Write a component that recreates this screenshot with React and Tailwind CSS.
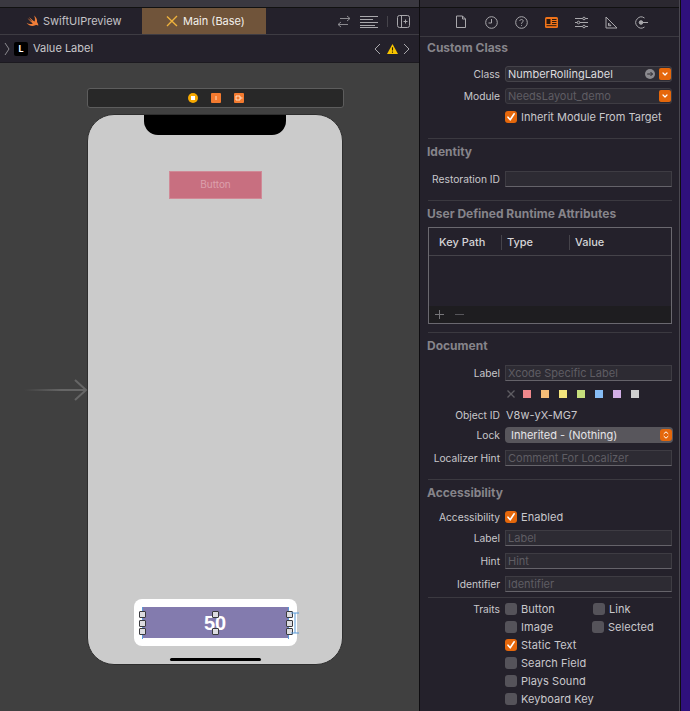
import React from "react";

function Check({ on }) {
  return (
    <span className={`w-[12px] h-[12px] rounded-[3px] flex items-center justify-center shrink-0 ${on ? "bg-[#e5670b]" : "bg-[#55535a]"}`}>
      {on && (
        <svg width="10" height="10" viewBox="0 0 10 10" fill="none">
          <path d="M2 5.2 L4.2 7.8 L8.2 1.8" stroke="#fff" strokeWidth="1.6" strokeLinecap="round" strokeLinejoin="round" />
        </svg>
      )}
    </span>
  );
}

function Chevron() {
  return (
    <span className="w-[12px] h-[12px] rounded-[2px] bg-[#e5670b] flex items-center justify-center">
      <svg width="8" height="8" viewBox="0 0 8 8" fill="none">
        <path d="M2 3 L4 5 L6 3" stroke="#fff" strokeWidth="1.2" strokeLinecap="round" strokeLinejoin="round" />
      </svg>
    </span>
  );
}

function Stepper() {
  return (
    <span className="w-[12px] h-[12px] rounded-[3px] bg-[#e5670b] flex items-center justify-center">
      <svg width="8" height="10" viewBox="0 0 8 10" fill="none">
        <path d="M2 3.6 L4 1.8 L6 3.6 M2 6.4 L4 8.2 L6 6.4" stroke="#fff" strokeWidth="1" strokeLinecap="round" strokeLinejoin="round" />
      </svg>
    </span>
  );
}

function Heading({ children, className = "" }) {
  return <div className={`pl-[7px] text-[12px] leading-[14px] font-bold text-[#86848a] ${className}`}>{children}</div>;
}

function Label({ children }) {
  return <div className="w-[80px] text-right text-[10.25px] text-[#c9c8cb] leading-[14px] shrink-0 whitespace-nowrap">{children}</div>;
}

function Field({ placeholder }) {
  return (
    <div className="w-[167px] h-[16px] ml-[5px] bg-[#2d2b33] border border-[#3e3c43] border-b-[#65636a] px-[2px] text-[11px] leading-[14px] text-[#5f5d63] overflow-hidden whitespace-nowrap">
      {placeholder}
    </div>
  );
}

function Divider({ className = "" }) {
  return <div className={`ml-[8px] w-[244px] h-px bg-[#3b3940] ${className}`} />;
}

function Row({ label, className = "", children }) {
  return (
    <div className={`flex items-center ${className}`}>
      <Label>{label}</Label>
      {children}
    </div>
  );
}

function Trait({ on, children, w = "w-[88px]" }) {
  return (
    <div className={`flex items-center gap-[4px] ${w}`}>
      <Check on={on} />
      <span className="text-[11px] leading-[14px] tracking-[0.05px] text-[#c9c8cb] whitespace-nowrap">{children}</span>
    </div>
  );
}

function InspectorTabs() {
  const stroke = "#a9a8ac";
  return (
    <div className="h-[28px] flex items-center pl-[35px] gap-[17px]">
      <svg width="13" height="14" viewBox="0 0 13 14" fill="none" stroke={stroke}>
        <path d="M1.5 1 H7.5 L10.5 4 V12.5 H1.5 Z M7.5 1 V4 H10.5" />
      </svg>
      <svg width="13" height="13" viewBox="0 0 13 13" fill="none" stroke={stroke}>
        <circle cx="6.5" cy="6.5" r="5.8" />
        <path d="M6.5 3 V7 H3.5" />
      </svg>
      <svg width="13" height="13" viewBox="0 0 13 13" fill="none" stroke={stroke}>
        <circle cx="6.5" cy="6.5" r="5.8" />
        <path d="M4.8 5 C4.8 3 8.2 3 8.2 5 C8.2 6.2 6.5 6.2 6.5 7.8 M6.5 9.2 V10" />
      </svg>
      <svg width="13" height="11" viewBox="0 0 13 11" fill="none">
        <rect width="13" height="11" rx="1.5" fill="#f0731a" />
        <rect x="1.5" y="2" width="4" height="5" fill="#2a1a10" />
        <path d="M7 2.5 H11.5 M7 4.5 H11.5 M7 6.5 H11.5 M1.5 8.7 H11.5" stroke="#2a1a10" strokeWidth="1" />
      </svg>
      <svg width="13" height="13" viewBox="0 0 13 13" fill="none" stroke={stroke}>
        <path d="M0 2.5 H13 M0 6.5 H13 M0 10.5 H13" />
        <circle cx="9" cy="2.5" r="1.3" fill="#24212b" />
        <circle cx="3.5" cy="6.5" r="1.3" fill="#24212b" />
        <circle cx="9" cy="10.5" r="1.3" fill="#24212b" />
      </svg>
      <svg width="13" height="13" viewBox="0 0 13 13" fill="none" stroke={stroke}>
        <path d="M1 1 L12 12 H1 Z M3.5 7 L6 9.7 H3.5 Z" />
      </svg>
      <svg width="13" height="13" viewBox="0 0 13 13" fill="none" stroke={stroke}>
        <path d="M9.5 2 A5.5 5.5 0 1 0 9.5 11" />
        <circle cx="6" cy="6.5" r="1.8" fill={stroke} />
        <path d="M7 6.5 H13" />
      </svg>
    </div>
  );
}

function Inspector() {
  const colors = ["#f0888c", "#f6bd78", "#f4e57c", "#c6df7c", "#87bdf6", "#d2aee6", "#cfcfcf"];
  return (
    <div className="w-[259px] h-[711px] bg-[#24212b] overflow-hidden shrink-0">
      <div className="h-[7px] bg-[#2b2830]" />
      <div className="h-px bg-[#111]" />
      <InspectorTabs />
      <div className="h-px bg-[#3b3940]" />
      <Heading className="mt-[4px]">Custom Class</Heading>

      <Row label="Class" className="mt-[11px]">
        <div className="w-[167px] h-[16px] ml-[5px] bg-[#2f2d35] border border-[#45434a] rounded-[3px] flex items-center pl-[2px] text-[11px] text-[#dcdbde] whitespace-nowrap">
          <span className="flex-1">NumberRollingLabel</span>
          <span className="w-[10px] h-[10px] rounded-full bg-[#8b8a8f] mr-[4px] flex items-center justify-center">
            <svg width="8" height="8" viewBox="0 0 8 8" fill="none">
              <path d="M1.2 4 H6.5 M4.5 2 L6.5 4 L4.5 6" stroke="#2a282f" strokeWidth="1" />
            </svg>
          </span>
          <Chevron />
        </div>
      </Row>
      <Row label="Module" className="mt-[6px]">
        <div className="w-[167px] h-[16px] ml-[5px] bg-[#2d2b33] border border-[#3e3c43] rounded-[3px] flex items-center pl-[2px] text-[11px] text-[#5f5d63] whitespace-nowrap">
          <span className="flex-1">NeedsLayout_demo</span>
          <Chevron />
        </div>
      </Row>
      <div className="flex items-center mt-[6px] ml-[85px] h-[14px] gap-[4px]">
        <Check on />
        <span className="text-[11px] text-[#c9c8cb] whitespace-nowrap">Inherit Module From Target</span>
      </div>
      <Divider className="mt-[14px]" />

      <Heading className="mt-[6px]">Identity</Heading>
      <Row label="Restoration ID" className="mt-[12px]">
        <Field placeholder="" />
      </Row>
      <Divider className="mt-[13px]" />

      <Heading className="mt-[6px]">User Defined Runtime Attributes</Heading>
      <div className="ml-[8px] mt-[6px] w-[244px] h-[97px] border border-[#6a686f] flex flex-col">
        <div className="h-[28px] pt-[1px] flex items-center border-b border-[#45434a] text-[11px] font-medium text-[#d5d4d7]">
          <span className="w-[73px] pl-[10px] border-r border-[#45434a] leading-[15px]">Key Path</span>
          <span className="w-[68px] pl-[5px] border-r border-[#45434a] leading-[15px]">Type</span>
          <span className="pl-[5px] leading-[15px]">Value</span>
        </div>
        <div className="flex-1" />
        <div className="h-[17px] bg-[#1e1d20] flex items-center pl-[5px] gap-[9px]">
          <svg width="11" height="11" viewBox="0 0 11 11" stroke="#77767a"><path d="M5.5 1 V10 M1 5.5 H10" /></svg>
          <svg width="11" height="11" viewBox="0 0 11 11" stroke="#56555a"><path d="M1 5.5 H10" /></svg>
        </div>
      </div>
      <Divider className="mt-[8px]" />

      <Heading className="mt-[6px]">Document</Heading>
      <Row label="Label" className="mt-[12px]">
        <Field placeholder="Xcode Specific Label" />
      </Row>
      <div className="flex items-center ml-[87px] mt-[6px] h-[13px]">
        <svg width="8" height="8" viewBox="0 0 8 8" stroke="#5f5d63" strokeWidth="1.3" className="mr-[8px]"><path d="M0.5 0.5 L7.5 7.5 M7.5 0.5 L0.5 7.5" /></svg>
        <div className="flex gap-[10px]">
          {colors.map((c) => (
            <span key={c} className="w-[8px] h-[8px]" style={{ backgroundColor: c }} />
          ))}
        </div>
      </div>
      <Row label="Object ID" className="mt-[8px]">
        <span className="ml-[6px] text-[11px] leading-[14px] text-[#c9c8cb]">V8w-yX-MG7</span>
      </Row>
      <Row label="Lock" className="mt-[5px]">
        <div className="w-[168px] h-[16px] ml-[5px] bg-[#58565c] rounded-[4px] flex items-center pl-[6px] pr-[1px] text-[11px] text-[#e6e5e8] whitespace-nowrap">
          <span className="flex-1">Inherited - (Nothing)</span>
          <Stepper />
        </div>
      </Row>
      <Row label="Localizer Hint" className="mt-[7px]">
        <Field placeholder="Comment For Localizer" />
      </Row>
      <Divider className="mt-[13px]" />

      <Heading className="mt-[6px]">Accessibility</Heading>
      <Row label="Accessibility" className="mt-[10px]">
        <div className="ml-[5px]"><Trait on>Enabled</Trait></div>
      </Row>
      <Row label="Label" className="mt-[6px]"><Field placeholder="Label" /></Row>
      <Row label="Hint" className="mt-[7px]"><Field placeholder="Hint" /></Row>
      <Row label="Identifier" className="mt-[7px]"><Field placeholder="Identifier" /></Row>
      <Divider className="mt-[5px]" />
      <Row label="Traits" className="mt-[4px]">
        <div className="ml-[5px] flex"><Trait>Button</Trait><Trait>Link</Trait></div>
      </Row>
      <div className="ml-[85px] mt-[4px] flex"><Trait>Image</Trait><Trait>Selected</Trait></div>
      <div className="ml-[85px] mt-[4px] flex"><Trait on>Static Text</Trait></div>
      <div className="ml-[85px] mt-[4px] flex"><Trait w="w-[120px]">Search Field</Trait></div>
      <div className="ml-[85px] mt-[4px] flex"><Trait w="w-[120px]">Plays Sound</Trait></div>
      <div className="ml-[85px] mt-[4px] flex"><Trait w="w-[120px]">Keyboard Key</Trait></div>
    </div>
  );
}

function Handle({ className }) {
  return <span className={`absolute w-[7px] h-[7px] bg-[#dcdce0] border border-[#3a3a3e] rounded-[1px] ${className}`} />;
}

function Canvas() {
  return (
    <div className="relative flex-1 bg-[#404040] overflow-hidden">
      {/* scene dock */}
      <div className="absolute left-[87px] top-[25px] w-[257px] h-[20px] bg-[#282828] border border-[#5d5d5d] rounded-[3px] flex items-center justify-center gap-[13px]">
        <span className="w-[10px] h-[10px] rounded-full bg-[#f5a800] flex items-center justify-center">
          <span className="w-[4px] h-[4px] bg-white" />
        </span>
        <span className="w-[10px] h-[10px] rounded-[1px] bg-[#f37a2f] flex items-center justify-center">
          <svg width="6" height="6" viewBox="0 0 6 6" stroke="#ffd9b8" fill="none"><path d="M3 1 V5" /></svg>
        </span>
        <span className="w-[10px] h-[10px] rounded-[1px] bg-[#f37a2f] flex items-center justify-center">
          <svg width="8" height="6" viewBox="0 0 8 6" stroke="#ffe1c8" fill="none"><path d="M1 1 H5 V5 H1 Z M5 3 H7.5" /></svg>
        </span>
      </div>

      {/* phone */}
      <div className="absolute left-[87px] top-[51px] w-[256px] h-[551px] bg-[#cbcbcb] rounded-[27px] border border-[#2e2e2e] overflow-hidden">
        <div className="absolute left-[56px] top-[-1px] w-[142px] h-[21px] bg-black rounded-b-[14px]" />
        <div className="absolute left-[81px] top-[56px] w-[93px] h-[28px] pb-[2px] bg-[#c86f80] border border-[#d08a97] flex items-center justify-center text-[10px] text-[#dca0ac]">
          Button
        </div>
        <div className="absolute left-[46px] top-[484px] w-[163px] h-[47px] bg-white rounded-[8px]" />
        <div className="absolute left-[54px] top-[492px] w-[146px] h-[31px] bg-[#837bae]" />
        <div className="absolute left-[82px] top-[543px] w-[91px] h-[3px] bg-black rounded-full" />
      </div>

      {/* selected label overlay */}
      <div className="absolute left-[142px] top-[544px] w-[146px] h-[31px] text-white font-semibold text-[20px] flex items-center justify-center font-['Liberation_Sans',sans-serif]">
        50
      </div>
      <span className="absolute left-[142px] top-[544px] w-px h-[32px] bg-[#5a9bd8]" />
      <span className="absolute left-[288px] top-[544px] w-px h-[32px] bg-[#5a9bd8]" />
      <Handle className="left-[139px] top-[548px]" />
      <Handle className="left-[139px] top-[557px]" />
      <Handle className="left-[139px] top-[565px]" />
      <Handle className="left-[212px] top-[548px]" />
      <Handle className="left-[212px] top-[565px]" />
      <Handle className="left-[286px] top-[548px]" />
      <Handle className="left-[286px] top-[557px]" />
      <Handle className="left-[286px] top-[565px]" />
      <svg className="absolute left-[291px] top-[549px]" width="8" height="22" viewBox="0 0 8 22" stroke="#5a9bd8" fill="none">
        <path d="M0 1 H8 M4 1 V21 M0 21 H8" />
      </svg>

      {/* initial scene arrow */}
      <svg className="absolute left-[24px] top-[314px]" width="64" height="26" viewBox="0 0 64 26" fill="none">
        <defs>
          <linearGradient id="fade" x1="0" x2="1" y1="0" y2="0">
            <stop offset="0" stopColor="#636363" stopOpacity="0" />
            <stop offset="0.6" stopColor="#666666" />
          </linearGradient>
        </defs>
        <rect x="0" y="12" width="62" height="2" fill="url(#fade)" />
        <path d="M51 3 L62 13 L51 23" stroke="#666666" strokeWidth="2" />
      </svg>
    </div>
  );
}

function Editor() {
  return (
    <div className="w-[419px] h-[711px] flex flex-col shrink-0 bg-[#24212b]">
      <div className="h-[7px] bg-[#3a3840]" />
      <div className="h-px bg-[#111]" />
      <div className="h-[27px] flex items-stretch border-b border-[#3e3c43]">
        <div className="w-[142px] flex items-center pl-[26px] gap-[4px] text-[11px] text-[#c4c3c7]">
          <svg width="13" height="12" viewBox="0 0 13 12">
            <path d="M8 0.5 C10.5 2.5 11.5 5 11 7 C12.3 8.7 12.4 10 12.2 10.8 C11.3 9.7 10.2 9.7 9.2 10.3 C6.5 11.7 3 11 0.5 7.8 C2.5 9.2 5 9.5 6.8 8.5 C5 7.2 3 5 1.5 3 C3.2 4.5 5 5.8 6.3 6.6 C5 5.2 3.8 3.5 3 2 C4.8 3.8 7 5.6 8.6 6.4 C9.3 4.6 9 2.5 8 0.5 Z" fill="#ef7d38" />
          </svg>
          <span>SwiftUIPreview</span>
        </div>
        <div className="w-[124px] bg-[#70543a] flex items-center pl-[24px] gap-[5px] text-[11px] text-[#f2efeb]">
          <svg width="12" height="12" viewBox="0 0 12 12" stroke="#eeb23d" strokeWidth="1.4" fill="none">
            <path d="M1 1.5 L11 11 M11 1 L1 11" />
          </svg>
          <span>Main (Base)</span>
        </div>
        <div className="flex-1 flex items-center pl-[71px]">
          <svg width="14" height="13" viewBox="0 0 14 13" stroke="#8b8a8f" fill="none">
            <path d="M3 3.5 H13 M10 1 L13 3.5 L10 6 M11 9.5 H1 M4 7 L1 9.5 L4 12" />
          </svg>
          <svg className="ml-[9px]" width="18" height="13" viewBox="0 0 18 13" stroke="#a8a7ab" fill="none">
            <path d="M0 1.5 H18 M0 4.5 H13 M0 7.5 H18 M0 10.5 H15 M0 12.5 H18" />
          </svg>
          <span className="ml-[9px] w-px h-[11px] bg-[#46444b]" />
          <svg className="ml-[9px]" width="13" height="13" viewBox="0 0 13 13" stroke="#a8a7ab" fill="none">
            <rect x="0.5" y="0.5" width="12" height="12" rx="2" />
            <path d="M4.5 0.5 V12.5 M6.5 6.5 H10.5 M8.5 4.5 V8.5" />
          </svg>
        </div>
      </div>
      <div className="h-[27px] flex items-center pl-[4px] pr-[4px] text-[11px] text-[#c9c8cb]">
        <svg width="6" height="14" viewBox="0 0 6 14" stroke="#8b8a8f" fill="none"><path d="M1 1 L5 7 L1 13" /></svg>
        <span className="ml-[4px] w-[14px] h-[14px] bg-black rounded-[2px] flex items-center justify-center text-[9px] font-bold text-white">L</span>
        <span className="ml-[5px] flex-1">Value Label</span>
        <svg width="7" height="12" viewBox="0 0 7 12" stroke="#a8a7ab" fill="none"><path d="M6 1 L1 6 L6 11" /></svg>
        <svg className="ml-[6px]" width="11" height="10" viewBox="0 0 11 10">
          <path d="M5.5 0 L11 10 H0 Z" fill="#f8c400" />
          <path d="M5.5 3.2 V6.6 M5.5 7.6 V8.8" stroke="#2a2000" strokeWidth="1.1" />
        </svg>
        <svg className="ml-[5px] mr-[5px]" width="7" height="12" viewBox="0 0 7 12" stroke="#a8a7ab" fill="none"><path d="M1 1 L6 6 L1 11" /></svg>
      </div>
      <div className="h-px bg-[#1c1a20]" />
      <Canvas />
    </div>
  );
}

export default function App() {
  return (
    <div className="w-[690px] h-[711px] flex overflow-hidden font-['Inter',sans-serif] bg-[#2f107c]">
      <Editor />
      <div className="w-px bg-[#0e0d10]" />
      <Inspector />
      <div className="w-px bg-[#4a4850]" />
      <div className="w-px bg-[#0e0d10]" />
      <div className="flex-1 bg-[#2f107c]" />
    </div>
  );
}
